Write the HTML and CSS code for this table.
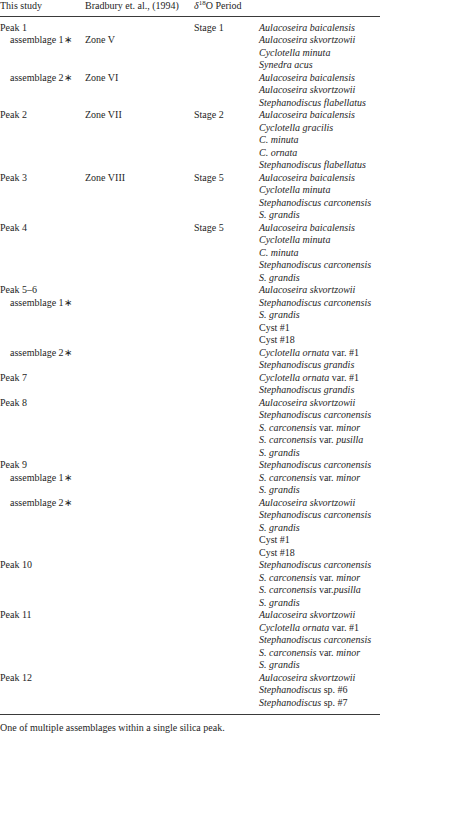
FILE: index.html
```html
<!DOCTYPE html>
<html>
<head>
<meta charset="utf-8">
<link rel="stylesheet" href="styles.css">
</head>
<body>
<div class="sheet">
  <table class="tbl">
    <colgroup>
      <col class="c1"><col class="c2"><col class="c3"><col class="c4">
    </colgroup>
    <thead>
      <tr><th>This study</th><th>Bradbury et. al., (1994)</th><th><i>δ</i><sup>18</sup>O Period</th><th></th></tr>
    </thead>
    <tbody>
      <tr class="first"><td>Peak 1</td><td></td><td>Stage 1</td><td><i>Aulacoseira baicalensis</i></td></tr>
      <tr><td class="sub">assemblage 1∗</td><td>Zone V</td><td></td><td><i>Aulacoseira skvortzowii</i><br><i>Cyclotella minuta</i><br><i>Synedra acus</i></td></tr>
      <tr><td class="sub">assemblage 2∗</td><td>Zone VI</td><td></td><td><i>Aulacoseira baicalensis</i><br><i>Aulacoseira skvortzowii</i><br><i>Stephanodiscus flabellatus</i></td></tr>
      <tr><td>Peak 2</td><td>Zone VII</td><td>Stage 2</td><td><i>Aulacoseira baicalensis</i><br><i>Cyclotella gracilis</i><br><i>C. minuta</i><br><i>C. ornata</i><br><i>Stephanodiscus flabellatus</i></td></tr>
      <tr><td>Peak 3</td><td>Zone VIII</td><td>Stage 5</td><td><i>Aulacoseira baicalensis</i><br><i>Cyclotella minuta</i><br><i>Stephanodiscus carconensis</i><br><i>S. grandis</i></td></tr>
      <tr><td>Peak 4</td><td></td><td>Stage 5</td><td><i>Aulacoseira baicalensis</i><br><i>Cyclotella minuta</i><br><i>C. minuta</i><br><i>Stephanodiscus carconensis</i><br><i>S. grandis</i></td></tr>
      <tr><td>Peak 5–6</td><td></td><td></td><td><i>Aulacoseira skvortzowii</i></td></tr>
      <tr><td class="sub">assemblage 1∗</td><td></td><td></td><td><i>Stephanodiscus carconensis</i><br><i>S. grandis</i><br>Cyst #1<br>Cyst #18</td></tr>
      <tr><td class="sub">assemblage 2∗</td><td></td><td></td><td><i>Cyclotella ornata</i> var. #1<br><i>Stephanodiscus grandis</i></td></tr>
      <tr><td>Peak 7</td><td></td><td></td><td><i>Cyclotella ornata</i> var. #1<br><i>Stephanodiscus grandis</i></td></tr>
      <tr><td>Peak 8</td><td></td><td></td><td><i>Aulacoseira skvortzowii</i><br><i>Stephanodiscus carconensis</i><br><i>S. carconensis</i> var. <i>minor</i><br><i>S. carconensis</i> var. <i>pusilla</i><br><i>S. grandis</i></td></tr>
      <tr><td>Peak 9</td><td></td><td></td><td><i>Stephanodiscus carconensis</i></td></tr>
      <tr><td class="sub">assemblage 1∗</td><td></td><td></td><td><i>S. carconensis</i> var. <i>minor</i><br><i>S. grandis</i></td></tr>
      <tr><td class="sub">assemblage 2∗</td><td></td><td></td><td><i>Aulacoseira skvortzowii</i><br><i>Stephanodiscus carconensis</i><br><i>S. grandis</i><br>Cyst #1<br>Cyst #18</td></tr>
      <tr><td>Peak 10</td><td></td><td></td><td><i>Stephanodiscus carconensis</i><br><i>S. carconensis</i> var. <i>minor</i><br><i>S. carconensis</i> var.<i>pusilla</i><br><i>S. grandis</i></td></tr>
      <tr><td>Peak 11</td><td></td><td></td><td><i>Aulacoseira skvortzowii</i><br><i>Cyclotella ornata</i> var. #1<br><i>Stephanodiscus carconensis</i><br><i>S. carconensis</i> var. <i>minor</i><br><i>S. grandis</i></td></tr>
      <tr class="last"><td>Peak 12</td><td></td><td></td><td><i>Aulacoseira skvortzowii</i><br><i>Stephanodiscus</i> sp. #6<br><i>Stephanodiscus</i> sp. #7</td></tr>
    </tbody>
  </table>
  <p class="note">One of multiple assemblages within a single silica peak.</p>
</div>
</body>
</html>
```
FILE: styles.css
```css
html, body {
  margin: 0;
  padding: 0;
  background: #fff;
}
body {
  font-family: "Liberation Serif", "Times New Roman", serif;
  font-size: 10px;
  line-height: 12.5px;
  color: #1e1e1e;
}
.sheet {
  width: 380px;
}
.tbl {
  width: 380px;
  border-collapse: collapse;
  table-layout: fixed;
}
.c1 { width: 85px; }
.c2 { width: 109px; }
.c3 { width: 65px; }
.c4 { width: 121px; }
.tbl th {
  font-weight: normal;
  text-align: left;
  vertical-align: top;
  padding: 0 0 3px 0;
  border-bottom: 1px solid #3a3a3a;
  white-space: nowrap;
}
.tbl th sup {
  font-size: 7px;
  line-height: 0;
  vertical-align: 4px;
}
.tbl td {
  padding: 0;
  vertical-align: top;
  white-space: nowrap;
}
.tbl tr.first td {
  padding-top: 5px;
}
.tbl tr.last td {
  padding-bottom: 5px;
  border-bottom: 1px solid #3a3a3a;
}
.tbl td.sub {
  padding-left: 10px;
}
.note {
  margin: 7px 0 0 0;
}
```
